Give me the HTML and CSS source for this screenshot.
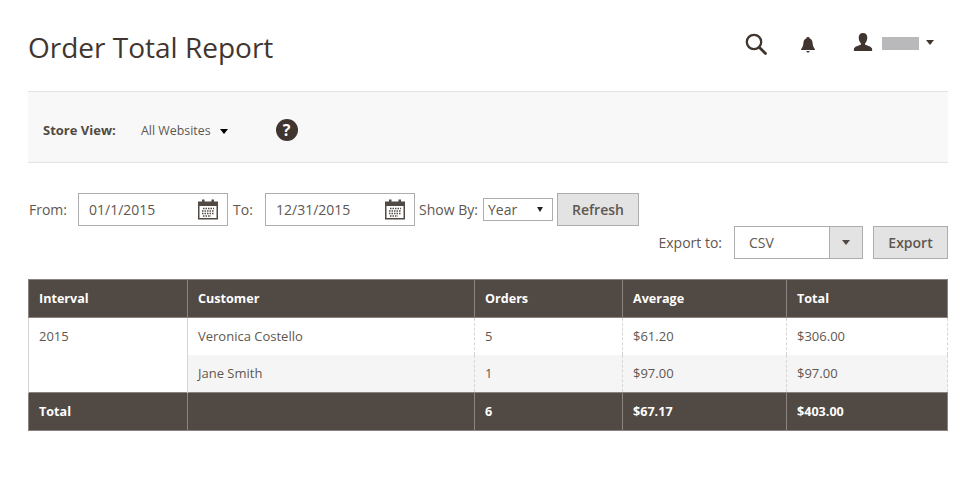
FILE: index.html
```html
<!DOCTYPE html>
<html lang="en">
<head>
<meta charset="utf-8">
<title>Order Total Report</title>
<link rel="stylesheet" href="styles.css">
</head>
<body>
<div class="page">
  <header class="top">
    <h1 class="title">Order Total Report</h1>
    <div class="actions">
      <svg class="i-search" width="24" height="24" viewBox="0 0 24 24"><circle cx="10" cy="10" r="7.2" fill="none" stroke="#41362f" stroke-width="2.3"/><path d="M15.2 15.2L21.5 21.5" stroke="#41362f" stroke-width="2.8" stroke-linecap="round"/></svg>
      <svg class="i-bell" width="16" height="18" viewBox="0 0 16 18"><path d="M8 1c.9 0 1.4.5 1.5 1.2C11.6 2.8 12.4 4.6 12.6 7c.2 2.800 1 4.500 2.400 6.200V14H1v-.8C2.400 11.500 3.200 9.800 3.400 7 3.600 4.600 4.400 2.800 6.500 2.200 6.600 1.500 7.100 1 8 1z" fill="#41362f"/><path d="M6.300 15h3.400c-.2 1-.8 1.600-1.700 1.600S6.500 16 6.300 15z" fill="#41362f"/></svg>
      <div class="user">
        <svg class="i-user" width="20" height="19" viewBox="0 0 20 19"><path d="M10 0c2.800 0 4.300 1.900 4.300 4.500 0 2.500-1 4.700-2.200 5.700v1.500c2.800 1 6.400 1.900 7 4V18H.9v-2.300c.6-2.100 4.200-3 7-4v-1.500C6.700 9.200 5.700 7 5.700 4.500 5.700 1.900 7.200 0 10 0z" fill="#41362f"/></svg>
        <span class="redacted"></span>
        <span class="caret"></span>
      </div>
    </div>
  </header>

  <section class="store">
    <span class="store-label">Store View:</span>
    <span class="store-value">All Websites</span>
    <span class="caret store-caret"></span>
    <span class="help">?</span>
  </section>

  <form class="filters">
    <label class="lab lab-from">From:</label>
    <div class="date"><span>01/1/2015</span>
      <svg class="cal" width="22" height="21" viewBox="0 0 22 21"><rect x="1" y="2.500" width="20" height="18" fill="#514943"/><rect x="2.500" y="7" width="17" height="12" fill="#fff"/><rect x="5" y="0.500" width="2.500" height="5" fill="#514943"/><rect x="14.500" y="0.500" width="2.500" height="5" fill="#514943"/><path d="M6 9.500h11M5 12h12M5 14.500h12M6 17h8" stroke="#514943" stroke-width="1.500" stroke-dasharray="1.500 1"/></svg>
    </div>
    <label class="lab lab-to">To:</label>
    <div class="date"><span>12/31/2015</span>
      <svg class="cal" width="22" height="21" viewBox="0 0 22 21"><rect x="1" y="2.500" width="20" height="18" fill="#514943"/><rect x="2.500" y="7" width="17" height="12" fill="#fff"/><rect x="5" y="0.500" width="2.500" height="5" fill="#514943"/><rect x="14.500" y="0.500" width="2.500" height="5" fill="#514943"/><path d="M6 9.500h11M5 12h12M5 14.500h12M6 17h8" stroke="#514943" stroke-width="1.500" stroke-dasharray="1.500 1"/></svg>
    </div>
    <label class="lab lab-show">Show By:</label>
    <div class="mini-select"><span>Year</span><span class="caret mini-caret"></span></div>
    <button type="button" class="btn btn-refresh">Refresh</button>
  </form>

  <div class="export">
    <label class="lab">Export to:</label>
    <div class="export-select"><span class="export-val">CSV</span><span class="export-arrow"><span class="caret"></span></span></div>
    <button type="button" class="btn btn-export">Export</button>
  </div>

  <table class="report">
    <colgroup><col class="c1"><col class="c2"><col class="c3"><col class="c4"><col class="c5"></colgroup>
    <thead>
      <tr><th>Interval</th><th>Customer</th><th>Orders</th><th>Average</th><th>Total</th></tr>
    </thead>
    <tbody>
      <tr><td rowspan="2" class="interval">2015</td><td>Veronica Costello</td><td>5</td><td>$61.20</td><td>$306.00</td></tr>
      <tr class="alt"><td>Jane Smith</td><td>1</td><td>$97.00</td><td>$97.00</td></tr>
    </tbody>
    <tfoot>
      <tr><th>Total</th><th></th><th>6</th><th>$67.17</th><th>$403.00</th></tr>
    </tfoot>
  </table>
</div>
</body>
</html>
```
FILE: styles.css
```css
* { box-sizing: border-box; }
html, body { margin: 0; padding: 0; background: #fff; }
body { font-family: "Open Sans", sans-serif; color: #41362f; font-size: 14px; overflow: hidden; }
.page { width: 976px; height: 480px; padding: 0 28px; }

.top { height: 91px; display: flex; justify-content: space-between; }
.title { margin: 28px 0 0; font-size: 28px; font-weight: 400; line-height: 38px; color: #41362f; }
.actions { display: flex; align-items: flex-start; width: 216px; padding-top: 32px; }
.i-search { margin-left: 12px; }
.i-bell { margin: 4px 0 0 32px; }
.user { display: flex; align-items: center; margin-left: 37px; margin-top: 1px; }
.redacted { width: 37px; height: 13px; background: #b9b9bb; margin: 2px 0 0 9px; }
.user .caret { margin: 0 0 0 7px; }

.caret { display: inline-block; width: 0; height: 0; border-style: solid; border-width: 5px 4.5px 0; border-color: #41362f transparent transparent; }

.store { height: 72px; background: #f8f8f8; border-top: 1px solid #e3e3e3; border-bottom: 1px solid #e3e3e3; display: flex; align-items: center; padding: 6px 0 0 15px; }
.store-label { font-size: 13px; font-weight: 700; width: 98px; color: #514943; }
.store-value { font-size: 12.4px; color: #5f5750; }
.store-caret { margin-left: 9px; margin-top: 2px; border-color: #000 transparent transparent; }
.help { width: 22px; height: 22px; border-radius: 50%; background: #41362f; color: #fff; font-weight: 700; font-size: 16px; line-height: 22px; text-align: center; margin-left: 48px; }

.filters { display: flex; align-items: center; margin-top: 30px; height: 33px; }
.lab { font-size: 14px; color: #5f5750; }
.lab-from { width: 50px; padding-left: 1px; }
.lab-to { width: 32px; margin-left: 5px; }
.lab-show { margin-left: 4px; width: 64px; }
.date { width: 150px; height: 33px; border: 1px solid #adadad; background: #fff; display: flex; align-items: center; justify-content: space-between; padding: 0 8px 0 10px; font-size: 14px; color: #5f5750; }
.cal { flex: none; }
.mini-select { width: 70px; height: 23px; border: 1px solid #adadad; display: flex; align-items: center; justify-content: space-between; padding: 0 9px 0 4px; font-size: 14px; color: #5f5750; }
.mini-caret { border-width: 5px 3.500px 0; border-color: #222 transparent transparent; }
.btn { font-family: "Open Sans", sans-serif; font-size: 14px; font-weight: 600; color: #5f5750; background: #e3e3e3; border: 1px solid #adadad; padding: 0; height: 33px; }
.btn-refresh { width: 82px; margin-left: 4px; }

.export { display: flex; justify-content: flex-end; align-items: center; height: 33px; }
.export .lab { margin-right: 12px; }
.export-select { display: flex; width: 129px; height: 33px; border: 1px solid #adadad; background: #fff; }
.export-val { flex: 1; padding-left: 14px; line-height: 31px; font-size: 14px; color: #5f5750; }
.export-arrow { width: 33px; background: #e3e3e3; border-left: 1px solid #adadad; display: flex; align-items: center; justify-content: center; }
.export-arrow .caret { border-width: 5px 4px 0; border-color: #514943 transparent transparent; }
.btn-export { width: 75px; margin-left: 10px; }

.report { margin-top: 20px; width: 919px; table-layout: fixed; border-collapse: collapse; font-size: 13px; border-bottom: 1px solid #8a837f; }
.c1 { width: 159px; } .c2 { width: 287px; } .c3 { width: 148px; } .c4 { width: 164px; } .c5 { width: 161px; }
.report th { background: #514943; color: #fff; font-weight: 700; font-size: 12.6px; text-align: left; height: 38px; padding: 0 10px; border: 1px solid #8a837f; }
.report td { height: 37px; padding: 0 10px; color: #5f5750; border-left: 1px dashed #d6d6d6; border-right: 1px dashed #d6d6d6; background: #fff; }
.report td.interval { vertical-align: top; padding-top: 9px; border-left: 1px solid #d6d6d6; border-right: 1px solid #d6d6d6; }
.report tr.alt td { background: #f5f5f5; height: 38px; padding-bottom: 1px; }
.report tfoot th { padding-bottom: 1px; }
```
